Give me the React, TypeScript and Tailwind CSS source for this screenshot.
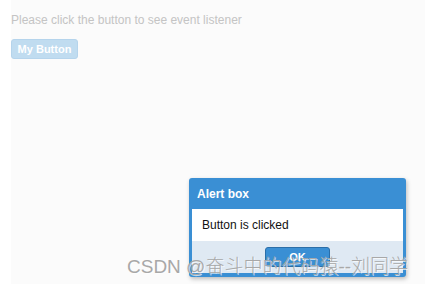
export default function App() {
  return (
    <div className="relative w-[425px] h-[286px] bg-white overflow-hidden" style={{ fontFamily: '"Liberation Sans", Arial, sans-serif' }}>
      <div className="ml-[11px] h-[284px] bg-[#fbfbfb] pt-[13px]">
        <p className="text-[12px] leading-[14px] text-[#c4c4c4]">Please click the button to see event listener</p>
        <button className="mt-[12px] w-[67px] h-[20px] rounded-[3px] bg-[#c0dcf0] border border-[#b5d4ec] text-white text-[11px] font-bold leading-none">
          My Button
        </button>
      </div>

      <div className="absolute left-[189px] top-[178px] w-[217px] h-[99px] bg-[#3a8fd4] rounded-[3px] shadow-[1px_2px_4px_rgba(0,0,0,0.25)] px-[3px] pb-[4px] flex flex-col">
        <div className="h-[31px] flex items-center pl-[5px] text-white font-bold text-[12px]">Alert box</div>
        <div className="h-[32px] bg-white flex items-center pl-[10px] text-[12px] text-[#111]">Button is clicked</div>
        <div className="flex-1 bg-[#dfe9f3] flex justify-center items-start pt-[6px]">
          <button className="w-[65px] h-[20px] rounded-[3px] bg-[#3a8fd4] border border-[#2b6ea8] text-white text-[11px] font-bold leading-none">
            OK
          </button>
        </div>
      </div>

      <div
        className="absolute left-[127px] top-[255px] text-[19px] leading-[23px] font-light text-[#a8a8a8] whitespace-nowrap"
        style={{ fontFamily: '"Liberation Sans", "Noto Sans CJK SC", sans-serif', textShadow: '1px 1px 0 rgba(255,255,255,0.7)' }}
      >
        CSDN @奋斗中的代码猿--刘同学
      </div>
    </div>
  );
}
